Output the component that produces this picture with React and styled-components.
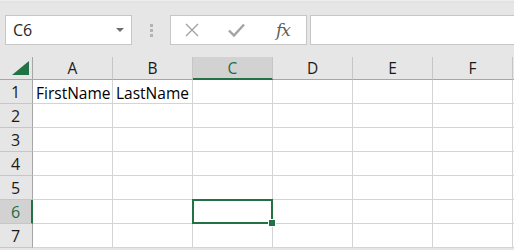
import React from "react";
import styled, { createGlobalStyle } from "styled-components";

const GlobalStyle = createGlobalStyle`
  html, body {
    margin: 0;
    padding: 0;
    background: #e6e6e6;
    overflow: hidden;
  }
  * {
    box-sizing: border-box;
  }
`;

const Page = styled.div`
  width: 514px;
  height: 250px;
  display: flex;
  flex-direction: column;
  background: #e6e6e6;
  overflow: hidden;
  font-family: "Open Sans", "Liberation Sans", sans-serif;
`;

const Toolbar = styled.div`
  height: 57px;
  flex: none;
  display: flex;
  align-items: flex-start;
  padding-top: 15px;
  padding-left: 5px;
  background: linear-gradient(#f2f2f2 0, #dedede 2px, #e6e6e6 3px);
`;

const Field = styled.div`
  height: 30px;
  background: #fff;
  border: 1px solid #c6c6c6;
  display: flex;
  align-items: center;
`;

const NameBox = styled(Field)`
  width: 127px;
  padding: 0 7px 0 7px;
  justify-content: space-between;
  font-size: 16px;
  color: #262626;
`;

const Caret = styled.span`
  width: 0;
  height: 0;
  border-left: 4px solid transparent;
  border-right: 4px solid transparent;
  border-top: 4px solid #6d6d6d;
`;

const Grip = styled.div`
  width: 38px;
  height: 30px;
  display: flex;
  flex-direction: column;
  align-items: center;
  justify-content: center;
  gap: 2px;
`;

const Dot = styled.span`
  width: 3px;
  height: 3px;
  background: #b3b3b3;
`;

const ButtonBox = styled(Field)`
  width: 137px;
  padding: 0 12px 0 12px;
  justify-content: space-between;
`;

const IconButton = styled.span`
  width: ${(p) => p.$w || 18}px;
  display: flex;
  justify-content: center;
  align-items: center;
`;

const Fx = styled.span`
  font-family: "DejaVu Serif", "Liberation Serif", serif;
  font-style: italic;
  font-size: 17px;
  color: #5e5e5e;
  letter-spacing: -1px;
`;

const FormulaInput = styled(Field)`
  flex: 1;
  margin-left: 3px;
  border-right: none;
`;

const Sheet = styled.div`
  display: grid;
  grid-template-columns: 33px repeat(6, 80px) 1fr;
  grid-template-rows: 23px repeat(7, 24px);
  background: #fff;
`;

const Corner = styled.div`
  background: #e6e6e6;
  border-right: 1px solid #a6a6a6;
  border-bottom: 1px solid #a6a6a6;
  display: flex;
  align-items: flex-end;
  justify-content: flex-end;
  padding: 0 3px 4px 0;
`;

const ColHead = styled.div`
  background: ${(p) => (p.$active ? "#d2d2d2" : "#e6e6e6")};
  border-right: 1px solid #c6c6c6;
  border-bottom: ${(p) => (p.$active ? "2px solid #217346" : "1px solid #a6a6a6")};
  color: ${(p) => (p.$active ? "#1e6b44" : "#1a1a1a")};
  font-size: 15.5px;
  display: flex;
  align-items: center;
  justify-content: center;
  padding-top: ${(p) => (p.$active ? "1px" : "0")};
`;

const RowHead = styled.div`
  background: ${(p) => (p.$active ? "#d2d2d2" : "#e6e6e6")};
  border-bottom: 1px solid #c6c6c6;
  border-right: ${(p) => (p.$active ? "2px solid #217346" : "1px solid #a6a6a6")};
  color: ${(p) => (p.$active ? "#1e6b44" : "#1a1a1a")};
  font-size: 16px;
  display: flex;
  align-items: center;
  justify-content: center;
  padding-right: ${(p) => (p.$active ? "0" : "1px")};
`;

const Cell = styled.div`
  position: relative;
  border-right: 1px solid #d4d4d4;
  border-bottom: 1px solid #d4d4d4;
  font-family: "Open Sans", "Liberation Sans", sans-serif;
  font-size: 15.5px;
  color: #000;
  display: flex;
  align-items: center;
  padding: 2px 0 0 3px;
  white-space: nowrap;
`;

const Selection = styled.div`
  position: absolute;
  z-index: 2;
  left: -1px;
  top: -1px;
  right: -1px;
  bottom: -1px;
  border: 2px solid #217346;
`;

const Handle = styled.span`
  position: absolute;
  right: -5px;
  bottom: -5px;
  width: 8px;
  height: 8px;
  background: #217346;
  border: 1px solid #fff;
`;

const cols = ["A", "B", "C", "D", "E", "F"];
const data = { "1A": "FirstName", "1B": "LastName" };
const active = { row: 6, col: "C" };

function CornerTriangle() {
  return (
    <svg width="17" height="14" viewBox="0 0 17 14">
      <polygon points="17,0 17,14 0,14" fill="#217346" />
    </svg>
  );
}

function CloseIcon() {
  return (
    <svg width="14" height="14" viewBox="0 0 14 14">
      <path d="M1 1 L13 13 M13 1 L1 13" stroke="#a3a3a3" strokeWidth="1.4" fill="none" />
    </svg>
  );
}

function CheckIcon() {
  return (
    <svg width="17" height="14" viewBox="0 0 17 14">
      <path d="M1 7.5 L6 12.5 L16 1.5" stroke="#a3a3a3" strokeWidth="2.4" fill="none" />
    </svg>
  );
}

export default function App() {
  const rows = [1, 2, 3, 4, 5, 6, 7];
  return (
    <Page>
      <GlobalStyle />
      <Toolbar>
        <NameBox>
          <span>C6</span>
          <Caret />
        </NameBox>
        <Grip>
          <Dot />
          <Dot />
          <Dot />
        </Grip>
        <ButtonBox>
          <IconButton>
            <CloseIcon />
          </IconButton>
          <IconButton>
            <CheckIcon />
          </IconButton>
          <IconButton $w={22}>
            <Fx>fx</Fx>
          </IconButton>
        </ButtonBox>
        <FormulaInput />
      </Toolbar>
      <Sheet>
        <Corner>
          <CornerTriangle />
        </Corner>
        {cols.map((c) => (
          <ColHead key={c} $active={c === active.col}>
            {c}
          </ColHead>
        ))}
        <ColHead />
        {rows.map((r) => (
          <React.Fragment key={r}>
            <RowHead $active={r === active.row}>{r}</RowHead>
            {cols.map((c) => (
              <Cell key={c}>
                {data[r + c]}
                {r === active.row && c === active.col && (
                  <Selection>
                    <Handle />
                  </Selection>
                )}
              </Cell>
            ))}
            <Cell />
          </React.Fragment>
        ))}
      </Sheet>
    </Page>
  );
}
